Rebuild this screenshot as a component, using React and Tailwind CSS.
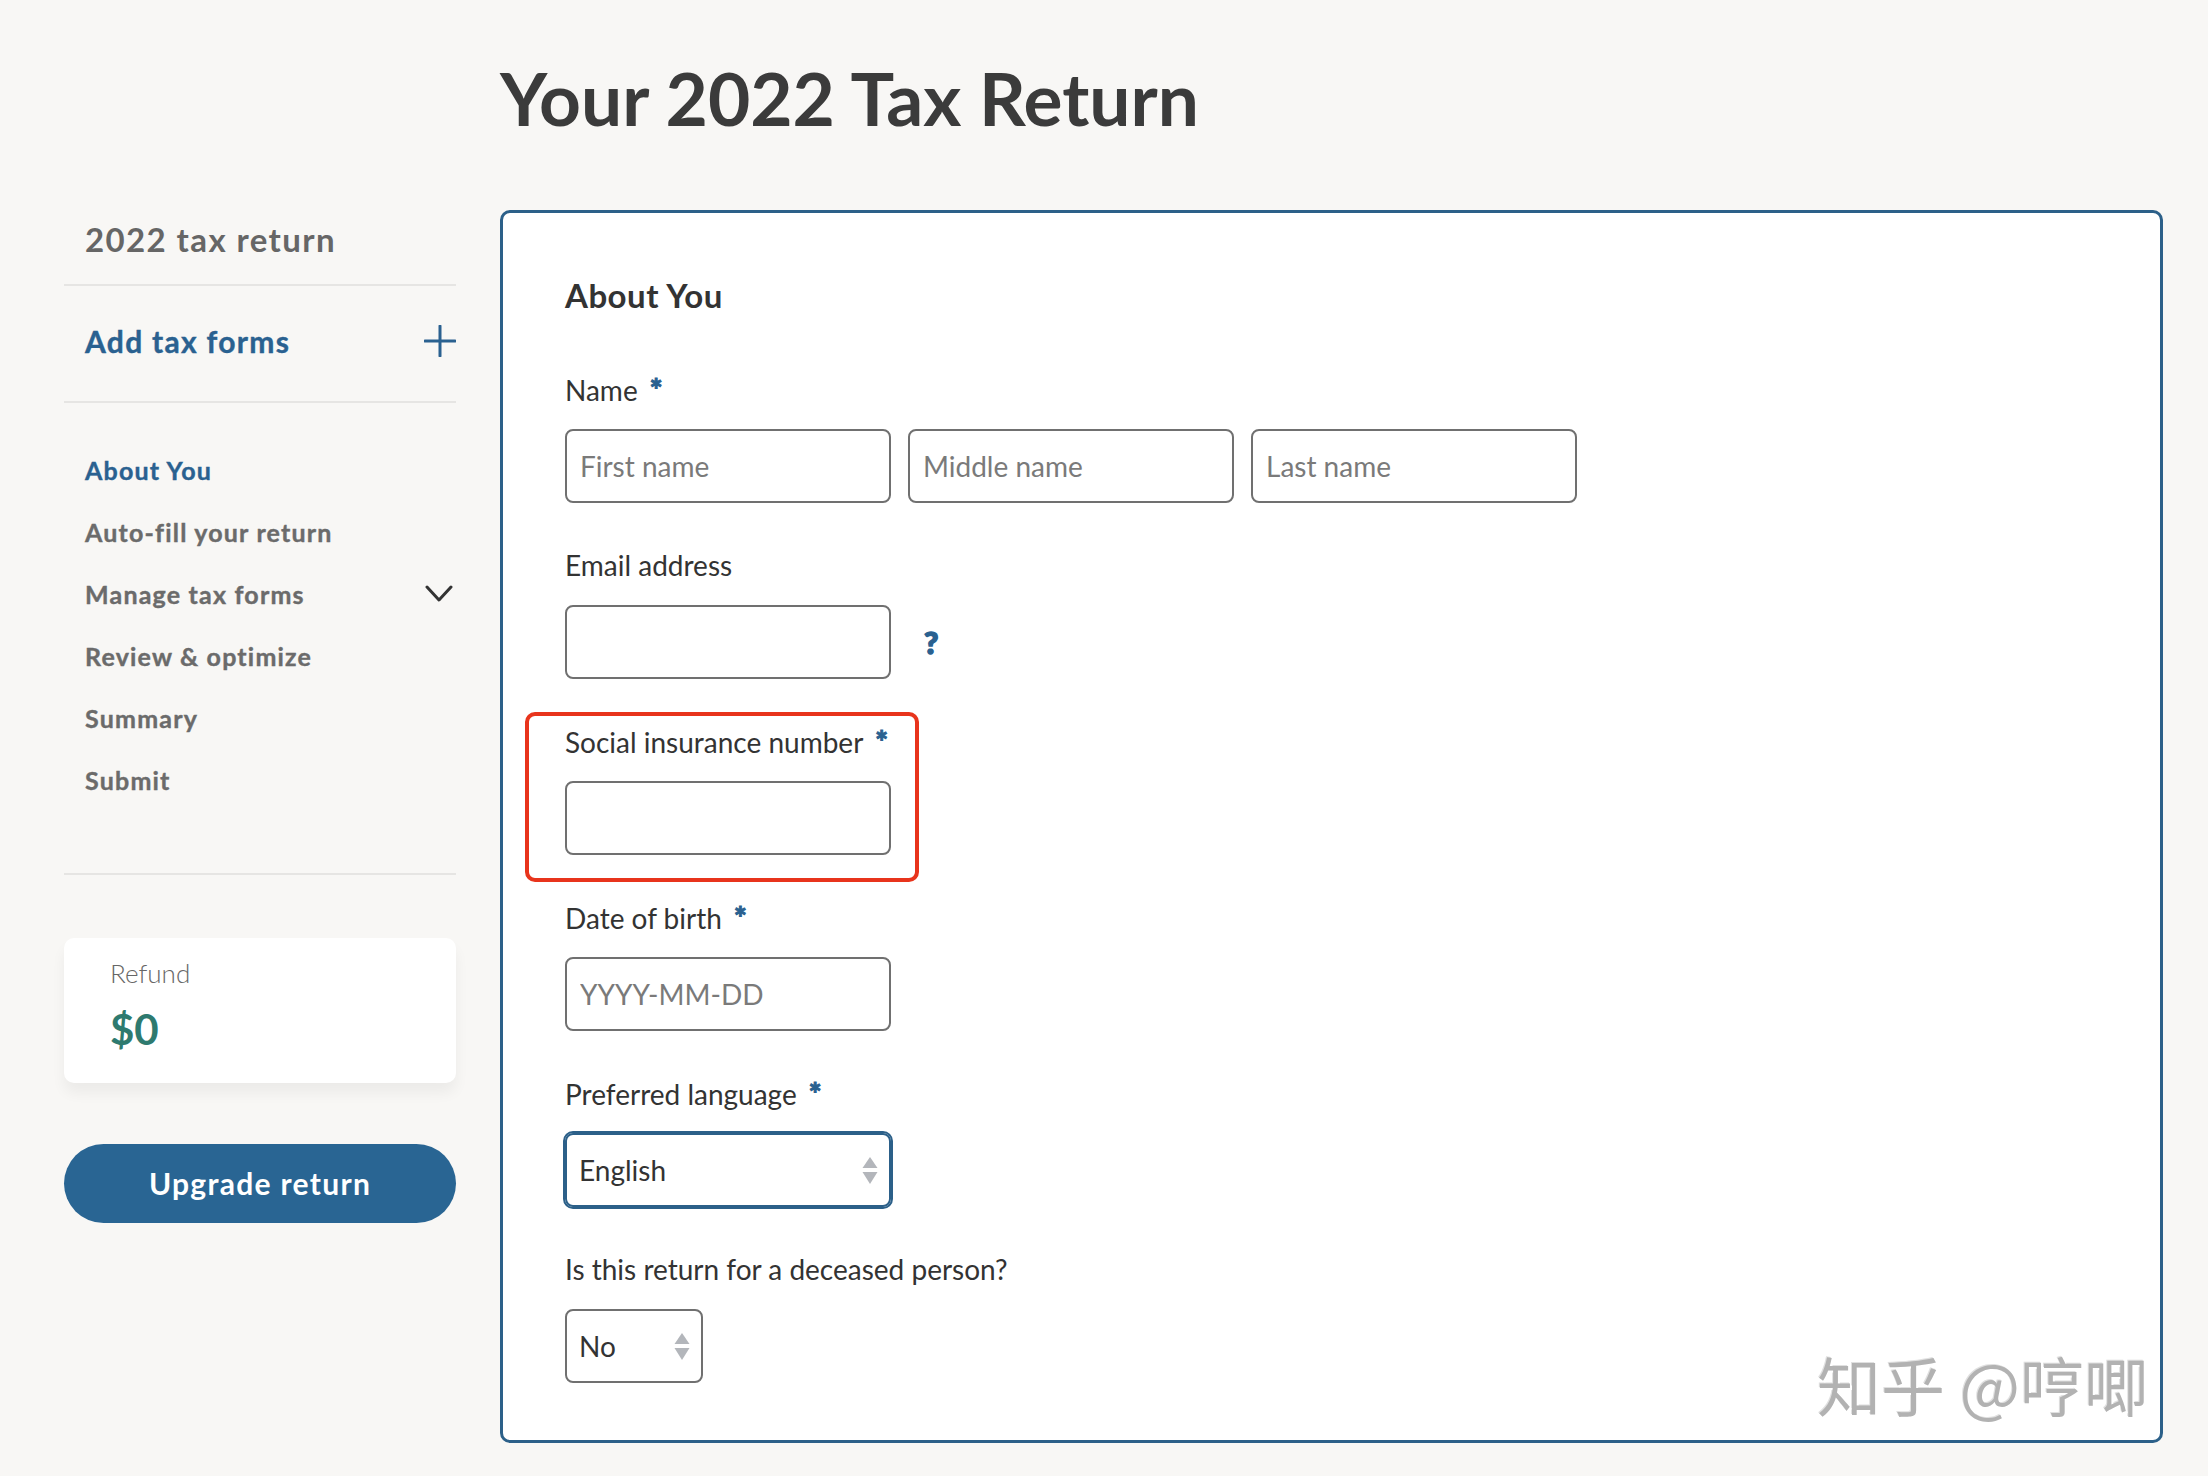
import React from "react";

function Arrows() {
  return (
    <svg width="16" height="27" viewBox="0 0 16 27" className="shrink-0">
      <path d="M8 0 L15.5 11 L0.5 11 Z" fill="#b3b6bb" />
      <path d="M8 27 L15.5 15 L0.5 15 Z" fill="#b3b6bb" />
    </svg>
  );
}

function Label({ children, req }) {
  return (
    <div className="flex h-[34px] items-baseline text-[28px] leading-[34px] text-[#333333]">
      <span>{children}</span>
      {req && <span className="ml-[12px] text-[30px] font-black text-[#2a6190] [-webkit-text-stroke:1px_#2a6190]">*</span>}
    </div>
  );
}

function TextInput({ placeholder, w = "w-[326px]" }) {
  return (
    <input
      type="text"
      placeholder={placeholder}
      className={`${w} h-[74px] rounded-[8px] border-2 border-[#707070] bg-white pl-[13px] text-[28px] text-[#333333] placeholder:text-[#7a7a7a] outline-none`}
    />
  );
}

const navItems = [
  { label: "About You", active: true },
  { label: "Auto-fill your return" },
  { label: "Manage tax forms", chevron: true },
  { label: "Review & optimize" },
  { label: "Summary" },
  { label: "Submit" },
];

export default function App() {
  return (
    <div className="flex h-[1476px] w-[2208px] overflow-hidden bg-[#f8f7f5] px-[64px] font-['Lato',sans-serif]">
      <aside className="w-[392px] shrink-0 pt-[219px]">
        <h2 className="pl-[21px] text-[33px] font-bold leading-[40px] tracking-[1.4px] text-[#666666]">2022 tax return</h2>
        <div className="mt-[25px] h-[2px] bg-[#e6e5e3]" />
        <div className="mt-[35px] flex h-[40px] items-center justify-between pl-[21px]">
          <span className="text-[30px] font-bold leading-[40px] tracking-[1.3px] text-[#2a6190] [-webkit-text-stroke:0.4px_#2a6190]">Add tax forms</span>
          <svg width="32" height="32" viewBox="0 0 32 32" className="shrink-0">
            <path d="M16 1 V31 M1 16 H31" stroke="#2a6190" strokeWidth="3" strokeLinecap="round" />
          </svg>
        </div>
        <div className="mt-[40px] h-[2px] bg-[#e6e5e3]" />
        <nav className="mt-[36px] pl-[21px]">
          {navItems.map((it) => (
            <div key={it.label} className="flex h-[62px] items-center justify-between pr-[3px]">
              <span
                className={`text-[25px] font-bold leading-[62px] tracking-[1.2px] ${it.active ? "text-[#2a6190] [-webkit-text-stroke:0.4px_#2a6190]" : "text-[#6b6b6b] [-webkit-text-stroke:0.4px_#6b6b6b]"}`}
              >
                {it.label}
              </span>
              {it.chevron && (
                <svg width="28" height="18" viewBox="0 0 28 18" className="shrink-0">
                  <path d="M2 2 L14 15 L26 2" fill="none" stroke="#333333" strokeWidth="3" strokeLinecap="round" strokeLinejoin="round" />
                </svg>
              )}
            </div>
          ))}
        </nav>
        <div className="mt-[62px] h-[2px] bg-[#e6e5e3]" />
        <div className="mt-[63px] h-[145px] rounded-[10px] bg-white pl-[46px] pt-[19px] shadow-[0_10px_14px_rgba(0,0,0,0.05)]">
          <div className="text-[26px] font-light leading-[32px] text-[#666666]">Refund</div>
          <div className="mt-[15px] text-[42px] font-bold leading-[50px] text-[#2e7a6f]">$0</div>
        </div>
        <button className="mt-[61px] flex h-[79px] w-full items-center justify-center rounded-full bg-[#296593] text-[30px] font-bold tracking-[1.3px] text-white">
          Upgrade return
        </button>
      </aside>

      <main className="ml-[44px] w-[1663px] shrink-0">
        <h1 className="pt-[61px] text-[73px] font-bold leading-[74px] text-[#3b3b3b]">Your 2022 Tax Return</h1>
        <section className="relative mt-[75px] h-[1233px] rounded-[10px] border-[3px] border-[#2c6089] bg-white pl-[62px] pt-[62px]">
          <h3 className="text-[33px] font-bold leading-[40px] tracking-[0.5px] text-[#333333]">About You</h3>

          <div className="mt-[57px]">
            <Label req>Name</Label>
            <div className="mt-[23px] flex gap-[17px]">
              <TextInput placeholder="First name" />
              <TextInput placeholder="Middle name" />
              <TextInput placeholder="Last name" />
            </div>
          </div>

          <div className="mt-[45px]">
            <Label>Email address</Label>
            <div className="mt-[23px] flex items-center">
              <TextInput />
              <span className="ml-[33px] text-[31px] font-black text-[#2a6190] [-webkit-text-stroke:1.5px_#2a6190]">?</span>
            </div>
          </div>

          <div className="ml-[-40px] mt-[33px] w-[394px] rounded-[10px] border-[4px] border-[#e8341c] pb-[23px] pl-[36px] pt-[8px]">
            <Label req>Social insurance number</Label>
            <div className="mt-[23px]">
              <TextInput />
            </div>
          </div>

          <div className="mt-[18px]">
            <Label req>Date of birth</Label>
            <div className="mt-[23px]">
              <TextInput placeholder="YYYY-MM-DD" />
            </div>
          </div>

          <div className="mt-[45px]">
            <Label req>Preferred language</Label>
            <div className="mt-[23px] flex h-[74px] w-[326px] items-center justify-between rounded-[8px] border-2 border-[#2c6089] pl-[12px] pr-[11px] outline-2 outline-[#2c6089]">
              <span className="text-[28px] text-[#333333]">English</span>
              <Arrows />
            </div>
          </div>

          <div className="mt-[45px]">
            <Label>Is this return for a deceased person?</Label>
            <div className="mt-[23px] flex h-[74px] w-[138px] items-center justify-between rounded-[8px] border-2 border-[#707070] pl-[12px] pr-[11px]">
              <span className="text-[28px] text-[#333333]">No</span>
              <Arrows />
            </div>
          </div>

          <div className="absolute bottom-[20px] right-[12px] font-['Noto_Sans_CJK_SC',sans-serif] text-[64px] leading-[74px] text-[#b2b2b2] [text-shadow:2px_2px_0_#ffffff,-1px_-1px_0_#e0e0e0]">
            知乎 @哼唧
          </div>
        </section>
      </main>
    </div>
  );
}
